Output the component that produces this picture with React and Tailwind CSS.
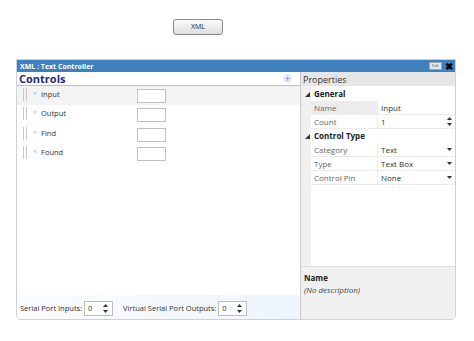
import React from 'react';

const controls = ['Input', 'Output', 'Find', 'Found'];

const Grip = () => (
    <div className="flex gap-[2px] h-[13px]">
        <div className="w-[1px] bg-[#c8c8c8]" />
        <div className="w-[1px] bg-[#c8c8c8]" />
    </div>
);

const Arrow = () => (
    <svg width="5" height="5" viewBox="0 0 5 5">
        <polygon points="5,0 5,5 0,5" fill="#333" />
    </svg>
);

const Spin = () => (
    <svg width="5" height="9" viewBox="0 0 5 9">
        <polygon points="2.5,0 5,3 0,3" fill="#333" />
        <polygon points="0,6 5,6 2.5,9" fill="#333" />
    </svg>
);

const Caret = () => (
    <svg width="5" height="3" viewBox="0 0 5 3">
        <polygon points="0,0 5,0 2.5,3" fill="#333" />
    </svg>
);

const PropRow = ({ name, value, icon, selected }) => (
    <div className="flex h-[14px] border-b border-[#ececec]">
        <div className={`w-[66px] pl-[3px] flex items-center text-[#666] ${selected ? 'bg-[#ececec]' : ''}`}>{name}</div>
        <div className="flex-1 flex items-center justify-between pl-[3px] pr-[3px] border-l border-[#ececec] text-[#333]">
            <span>{value}</span>
            {icon}
        </div>
    </div>
);

const Category = ({ title }) => (
    <div className="flex items-center h-[14px] -ml-[10px] pl-[4px] gap-[4px] font-bold text-[#222]">
        <Arrow />
        <span>{title}</span>
    </div>
);

const App = () => {
    return (
        <main className="w-[474px] h-[341px] bg-white text-[8px] font-['Open_Sans','Noto_Sans',sans-serif] text-[#333] overflow-hidden">
            <div className="pt-[19px] pl-[173px]">
                <button className="w-[50px] h-[16px] rounded-[3px] border border-[#8a8a8a] bg-gradient-to-b from-[#fafafa] to-[#dedede] text-[7px] text-[#222] flex items-center justify-center">
                    XML
                </button>
            </div>

            <div className="mt-[24px] ml-[16px] w-[440px] h-[261px] flex flex-col border border-[#c9d3dd] rounded-b-[5px] overflow-hidden">
                <div className="h-[12px] bg-[#3f80bf] flex items-center justify-between pl-[3px] pr-[2px]">
                    <span className="text-white font-bold text-[7px] leading-none">XML : Text Controller</span>
                    <div className="flex items-center gap-[3px]">
                        <div className="w-[13px] h-[8px] bg-[#e4e8ec] border border-[#9aa4ae] text-[4px] leading-none flex items-center justify-center text-[#555]">Edit</div>
                        <span className="text-black font-bold text-[10px] leading-none">✖</span>
                    </div>
                </div>

                <div className="flex-1 flex min-h-0">
                    <div className="w-[284px] flex flex-col border-r border-[#c8c8c8]">
                        <div className="h-[14px] flex items-center justify-between pl-[2px] pr-[8px] border-b border-[#bfbfbf]">
                            <span className="font-bold text-[11px] text-[#1c2a7a] leading-none">Controls</span>
                            <span className="w-[9px] h-[9px] rounded-full bg-[#e6e8f8] text-[#6a75d8] text-[9px] leading-none flex items-center justify-center">+</span>
                        </div>
                        <div className="flex-1 flex flex-col text-[7.5px]">
                            {controls.map((c, i) => (
                                <div key={c} className={`h-[19.3px] flex items-start pl-[6px] ${i === 0 ? 'bg-[#f3f3f3]' : ''}`}>
                                    <div className="mt-[2px]"><Grip /></div>
                                    <span className="mt-[3px] ml-[6px] text-[#bbb] text-[7px] leading-[10px]">×</span>
                                    <span className="mt-[3px] ml-[4px] w-[96px] leading-[10px]">{c}</span>
                                    <div className="mt-[3px] w-[29px] h-[14px] bg-white border border-[#c0c0c0]" />
                                </div>
                            ))}
                        </div>
                        <div className="h-[24px] flex items-center pl-[3px] pt-[3px] text-[7.5px] bg-gradient-to-r from-[#fbfcfe] to-[#eef5fc]">
                            <span>Serial Port Inputs:</span>
                            <div className="ml-[2px] w-[29px] h-[15px] bg-white border border-[#bdbdbd] flex items-center justify-between pl-[3px] pr-[4px]">
                                <span>0</span>
                                <Spin />
                            </div>
                            <span className="ml-[10px]">Virtual Serial Port Outputs:</span>
                            <div className="ml-[2px] w-[29px] h-[15px] bg-white border border-[#bdbdbd] flex items-center justify-between pl-[3px] pr-[4px]">
                                <span>0</span>
                                <Spin />
                            </div>
                        </div>
                    </div>

                    <div className="flex-1 flex flex-col bg-white">
                        <div className="h-[14px] bg-[#e6e6e6] flex items-center pl-[2px] text-[9px] text-[#333] leading-none">
                            Properties
                        </div>
                        <div className="flex-1 flex">
                            <div className="w-[10px] bg-[#f0f0f0]" />
                            <div className="flex-1 flex flex-col pt-[1px] bg-white">
                                <Category title="General" />
                                <PropRow name="Name" value="Input" selected />
                                <PropRow name="Count" value="1" icon={<Spin />} />
                                <Category title="Control Type" />
                                <PropRow name="Category" value="Text" icon={<Caret />} />
                                <PropRow name="Type" value="Text Box" icon={<Caret />} />
                                <PropRow name="Control Pin" value="None" icon={<Caret />} />
                            </div>
                        </div>
                        <div className="h-[53px] bg-[#f0f0f0] border-t border-[#dcdcdc] pl-[3px] pt-[5px]">
                            <div className="font-bold text-[#222]">Name</div>
                            <div className="italic text-[#444]">(No description)</div>
                        </div>
                    </div>
                </div>
            </div>
        </main>
    );
};

export default App;
